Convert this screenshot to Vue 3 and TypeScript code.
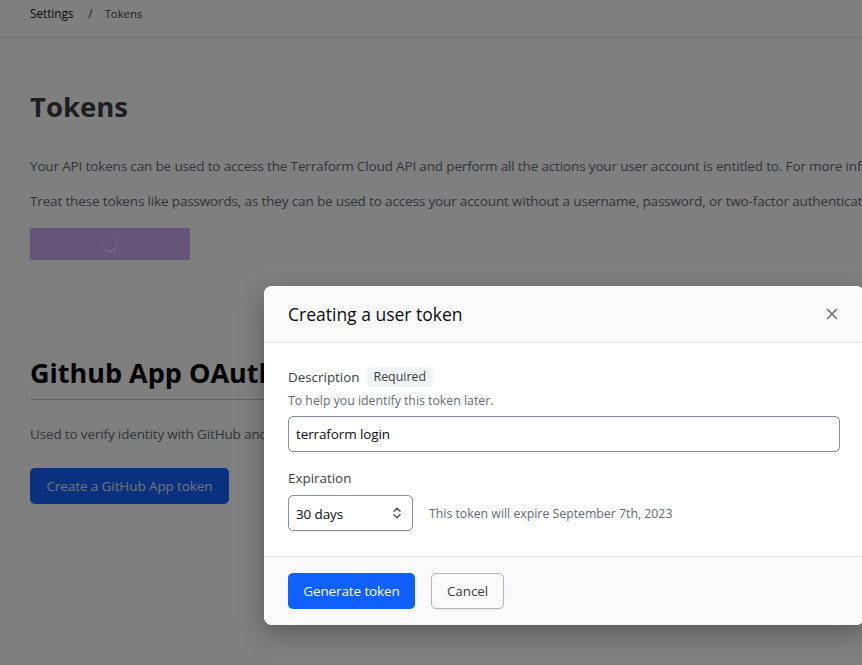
<script setup lang="ts">
const crumbs: string[] = ['Settings', 'Tokens']
</script>

<template>
  <div class="page">
    <header class="crumbs">
      <span class="crumb-root">{{ crumbs[0] }}</span>
      <span class="crumb-sep">/</span>
      <span class="crumb-leaf">{{ crumbs[1] }}</span>
    </header>
    <main class="content">
      <h1 class="title">Tokens</h1>
      <p class="copy first">Your API tokens can be used to access the Terraform Cloud API and perform all the actions your user account is entitled to. For more information, see the documentation.</p>
      <p class="copy second">Treat these tokens like passwords, as they can be used to access your account without a username, password, or two-factor authentication.</p>
      <button class="loading-btn"><span class="spinner"></span></button>
      <h2 class="subtitle">Github App OAuth Tokens</h2>
      <p class="copy third">Used to verify identity with GitHub and authorize access to your repositories.</p>
      <button class="github-btn">Create a GitHub App token</button>
    </main>

    <div class="overlay">
      <section class="modal">
        <div class="modal-head">
          <h3 class="modal-title">Creating a user token</h3>
          <svg class="close" width="16" height="16" viewBox="0 0 16 16" fill="none">
            <path d="M3.5 3.5l9 9M12.5 3.5l-9 9" stroke="#656a76" stroke-width="1.5" stroke-linecap="round" />
          </svg>
        </div>
        <div class="modal-body">
          <div class="label-row">
            <span class="label">Description</span>
            <span class="badge">Required</span>
          </div>
          <div class="hint">To help you identify this token later.</div>
          <div class="field">terraform login</div>
          <div class="label exp-label">Expiration</div>
          <div class="exp-row">
            <div class="select">
              <span class="select-value">30 days</span>
              <svg width="16" height="16" viewBox="0 0 16 16" fill="none">
                <path d="M5 6.2L8 3.2l3 3M5 9.8l3 3 3-3" stroke="#4f525c" stroke-width="1.5" stroke-linecap="round" stroke-linejoin="round" />
              </svg>
            </div>
            <span class="exp-note">This token will expire September 7th, 2023</span>
          </div>
        </div>
        <div class="modal-foot">
          <button class="primary">Generate token</button>
          <button class="secondary">Cancel</button>
        </div>
      </section>
    </div>
  </div>
</template>

<style>
html, body { margin: 0; background: #fff; overflow: hidden; }
</style>

<style scoped>
.page {
  position: relative;
  width: 862px;
  height: 665px;
  overflow: hidden;
  background: #fff;
  font-family: "Open Sans", "Noto Sans", sans-serif;
  color: #3b3d45;
}
.crumbs {
  height: 37px;
  border-bottom: 1px solid #dedfe3;
  box-sizing: content-box;
  padding-left: 30px;
  display: flex;
  align-items: flex-start;
  font-size: 11.7px;
  line-height: 27px;
}
.crumb-root { color: #0c0c0e; font-weight: 500; }
.crumb-sep { margin: 0 12px 0 15px; color: #3b3d45; }
.crumb-leaf { color: #3b3d45; font-size: 11.3px; }
.content { padding: 0 30px; white-space: nowrap; }
.title {
  margin: 49px 0 0;
  font-size: 27.5px;
  line-height: 40px;
  font-weight: 700;
  color: #3b3d45;
}
.copy { margin: 0; font-size: 13.5px; line-height: 20px; letter-spacing: -0.15px; color: #656a76; }
.first { margin-top: 29px; }
.second { margin-top: 15px; }
.loading-btn {
  display: flex;
  align-items: center;
  justify-content: center;
  margin-top: 17px;
  width: 160px;
  height: 32px;
  border: 0;
  border-radius: 2px;
  background: #cbaaf0;
  padding: 0;
}
.spinner {
  box-sizing: border-box;
  width: 16px;
  height: 16px;
  border-radius: 50%;
  border: 1.5px solid rgba(255, 255, 255, 0.28);
  border-bottom-color: rgba(255, 255, 255, 0.85);
}
.subtitle {
  margin: 93px 0 0;
  height: 46px;
  border-bottom: 1px solid #c4c4c4;
  font-size: 27px;
  line-height: 40px;
  font-weight: 700;
  color: #000;
}
.third { margin-top: 24px; }
.github-btn {
  display: block;
  margin-top: 24px;
  width: 199px;
  height: 36px;
  border: 0;
  border-radius: 5px;
  background: #1563ff;
  color: #dfe6f5;
  font: inherit;
  font-size: 13.5px;
  letter-spacing: -0.1px;
  padding: 0;
}
.overlay {
  position: absolute;
  inset: 0;
  background: rgba(0, 0, 0, 0.5);
  padding: 286px 0 0 264px;
  box-sizing: border-box;
}
.modal {
  width: 600px;
  height: 339px;
  background: #fff;
  border-radius: 8px;
  box-shadow: 0 8px 24px rgba(0, 0, 0, 0.3);
  display: flex;
  flex-direction: column;
  overflow: hidden;
}
.modal-head {
  flex: none;
  height: 56px;
  border-bottom: 1px solid #e3e4e7;
  background: #fafafa;
  display: flex;
  align-items: center;
  justify-content: space-between;
  padding: 0 24px;
}
.modal-title { margin: 0; font-size: 17.5px; font-weight: 500; color: #0c0c0e; }
.modal-body { flex: 1; padding: 24px 24px 0; }
.label-row { display: flex; align-items: center; gap: 7px; height: 20px; }
.label { font-size: 13.4px; font-weight: 500; color: #3b3d45; line-height: 20px; }
.badge {
  height: 20px;
  line-height: 20px;
  padding: 0 7px;
  border-radius: 5px;
  background: #f1f2f3;
  font-size: 12.4px;
  color: #3b3d45;
}
.hint { margin-top: 5px; font-size: 12.3px; line-height: 18px; color: #656a76; }
.field {
  box-sizing: border-box;
  margin-top: 6px;
  height: 36px;
  border: 1px solid #8c909c;
  border-radius: 5px;
  padding: 0 7px;
  font-size: 13.5px;
  letter-spacing: -0.12px;
  line-height: 34px;
  color: #0c0c0e;
  box-shadow: inset 0 1px 1px rgba(101, 106, 118, 0.1);
}
.exp-label { margin-top: 16px; }
.exp-row { display: flex; align-items: center; margin-top: 7px; gap: 16px; }
.select {
  box-sizing: border-box;
  width: 125px;
  height: 36px;
  border: 1px solid #8c909c;
  border-radius: 5px;
  padding: 0 7px;
  display: flex;
  align-items: center;
  justify-content: space-between;
  font-size: 13.5px;
  letter-spacing: -0.12px;
  color: #0c0c0e;
  box-shadow: 0 1px 1px rgba(101, 106, 118, 0.1);
}
.select-value { padding-top: 2px; }
.exp-note { font-size: 12.3px; color: #656a76; }
.modal-foot {
  flex: none;
  height: 68px;
  border-top: 1px solid #e3e4e7;
  background: #fafafa;
  display: flex;
  align-items: center;
  padding: 0 24px;
  gap: 16px;
}
.primary, .secondary {
  box-sizing: border-box;
  height: 36px;
  border-radius: 5px;
  font: inherit;
  font-size: 13.5px;
  letter-spacing: -0.12px;
  padding: 0;
}
.primary { width: 127px; border: 0; background: #1060ff; color: #fff; }
.secondary {
  width: 73px;
  border: 1px solid #b4b6bd;
  background: #fafafa;
  color: #3b3d45;
  box-shadow: 0 1px 1px rgba(101, 106, 118, 0.1);
}
</style>
